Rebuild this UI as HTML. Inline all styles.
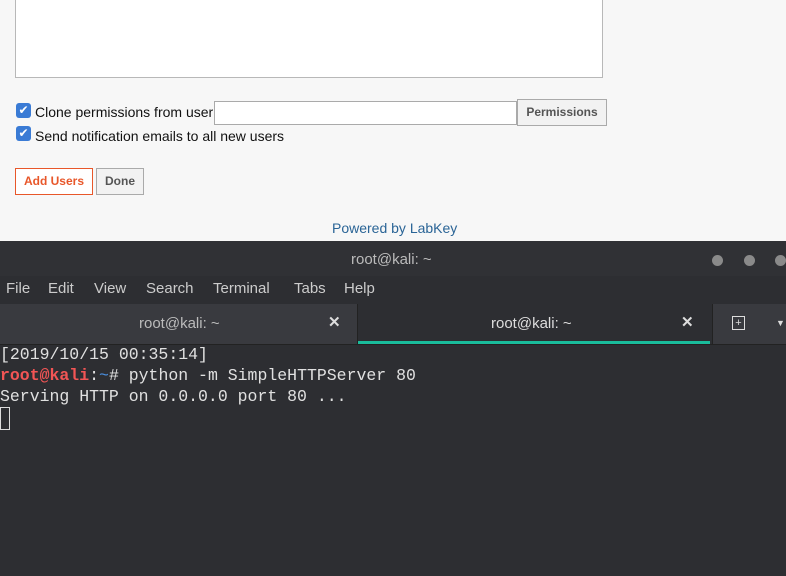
<!DOCTYPE html>
<html><head><style>
body{margin:0;width:786px;height:576px;overflow:hidden;background:#2d2e32;font-family:"Liberation Sans",sans-serif;position:relative}
.top{position:absolute;left:0;top:0;width:786px;height:241px;background:#f7f7f7}
.ta{position:absolute;left:15px;top:-2px;width:586px;height:78px;border:1px solid #b8b8b8;background:#fff}
.cb{position:absolute;width:15px;height:15px;background:#3a7bd5;border-radius:3px;color:#fff;font-size:12px;line-height:15px;text-align:center}
.lbl{position:absolute;font-size:14px;color:#111}
.btn{position:absolute;font-size:12px;font-weight:bold;text-align:center;box-sizing:border-box}
.mono{font-family:"Liberation Mono",monospace;font-size:16.5px;color:#e0e0e0;position:absolute;left:0;white-space:pre}
.m{position:absolute;top:280px;color:#ccc;font-size:15px}
</style></head><body>
<div class="top">
<div class="ta"></div>
<div class="cb" style="left:16px;top:103px">✔</div>
<div class="lbl" style="left:35px;top:104px">Clone permissions from user:</div>
<div style="position:absolute;left:214px;top:101px;width:301px;height:22px;border:1px solid #aaa;background:#fff"></div>
<div class="btn" style="left:517px;top:99px;width:90px;height:27px;border:1px solid #aaa;background:#f2f2f2;color:#555;line-height:25px">Permissions</div>
<div class="cb" style="left:16px;top:126px">✔</div>
<div class="lbl" style="left:35px;top:128px">Send notification emails to all new users</div>
<div class="btn" style="left:15px;top:168px;width:78px;height:27px;border:1px solid #e8572a;background:#fff;color:#e8572a;line-height:25px">Add Users</div>
<div class="btn" style="left:96px;top:168px;width:48px;height:27px;border:1px solid #aaa;background:#f2f2f2;color:#555;line-height:25px">Done</div>
<div style="position:absolute;left:332px;top:220px;font-size:14px;color:#2a6496">Powered by LabKey</div>
</div>
<div style="position:absolute;top:241px;left:0;width:786px;height:35px;background:#303135"></div>
<div style="position:absolute;top:251px;left:351px;color:#bbb;font-size:15px">root@kali: ~</div>
<div style="position:absolute;top:255px;left:712px;width:11px;height:11px;border-radius:50%;background:#8a8a8a"></div>
<div style="position:absolute;top:255px;left:744px;width:11px;height:11px;border-radius:50%;background:#8a8a8a"></div>
<div style="position:absolute;top:255px;left:775px;width:11px;height:11px;border-radius:50%;background:#8a8a8a"></div>
<div style="position:absolute;top:276px;left:0;width:786px;height:28px;background:#2d2e32"></div>
<span class="m" style="left:6px">File</span><span class="m" style="left:48px">Edit</span><span class="m" style="left:94px">View</span><span class="m" style="left:146px">Search</span><span class="m" style="left:213px">Terminal</span><span class="m" style="left:294px">Tabs</span><span class="m" style="left:344px">Help</span>
<div style="position:absolute;top:304px;left:0;width:786px;height:40px;background:#393a3f;border-bottom:1px solid #222"></div>
<div style="position:absolute;top:304px;left:357px;width:354px;height:40px;background:#2d2e32;border-left:1px solid #222;border-right:1px solid #222"></div>
<div style="position:absolute;top:341px;left:358px;width:352px;height:3px;background:#1abc9c"></div>
<div style="position:absolute;top:315px;left:139px;color:#bbb;font-size:15px">root@kali: ~</div>
<div style="position:absolute;top:313px;left:328px;color:#ddd;font-size:15px;font-weight:bold">✕</div>
<div style="position:absolute;top:315px;left:491px;color:#ddd;font-size:15px">root@kali: ~</div>
<div style="position:absolute;top:313px;left:681px;color:#ddd;font-size:15px;font-weight:bold">✕</div>
<div style="position:absolute;top:316px;left:732px;width:11px;height:12px;border:1.5px solid #ddd;color:#ddd;font-size:11px;line-height:12px;text-align:center">+</div>
<div style="position:absolute;top:318px;left:776px;color:#ddd;font-size:9px">▼</div>
<div class="mono" style="top:345px">[2019/10/15 00:35:14]</div>
<div class="mono" style="top:366px"><span style="color:#f25555;font-weight:bold">root@kali</span>:<span style="color:#4a8fe0">~</span># python -m SimpleHTTPServer 80</div>
<div class="mono" style="top:387px">Serving HTTP on 0.0.0.0 port 80 ...</div>
<div style="position:absolute;top:407px;left:0;width:8px;height:21px;border:1px solid #ddd"></div>
</body></html>
